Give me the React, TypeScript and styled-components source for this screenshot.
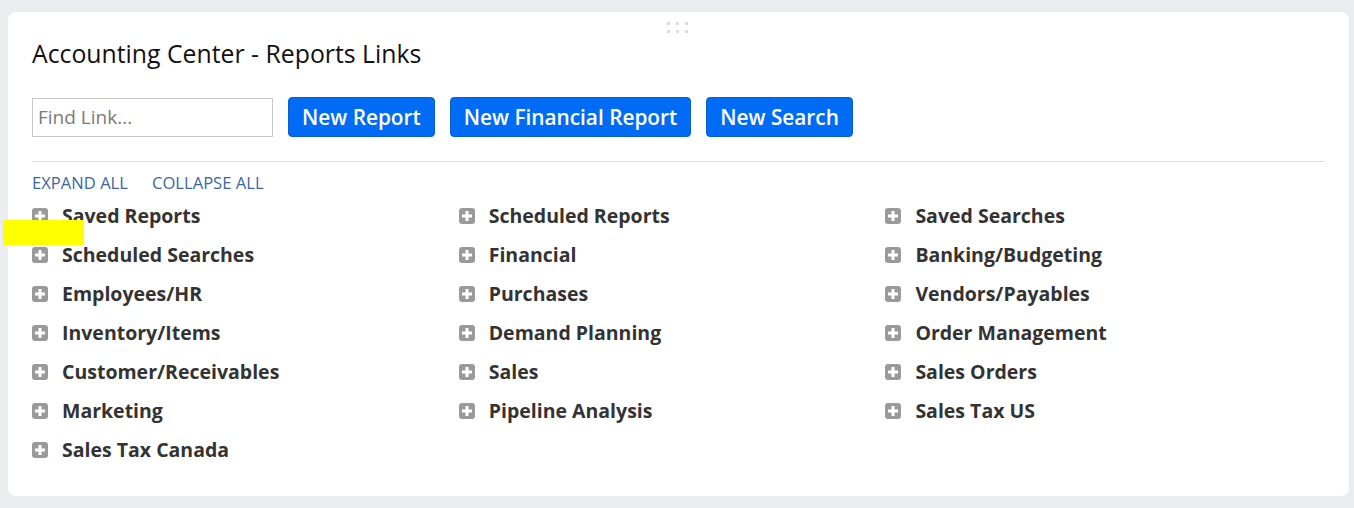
import React from "react";
import styled, { createGlobalStyle } from "styled-components";

const GlobalStyle = createGlobalStyle`
  html, body {
    margin: 0;
    padding: 0;
    background: #ebecf0;
    font-family: "Open Sans", "Noto Sans", sans-serif;
  }
  * { box-sizing: border-box; }
`;

const Page = styled.div`
  position: relative;
  padding: 12px 5px 13px 8px;
`;

const Card = styled.section`
  background: #ffffff;
  border-radius: 8px;
  padding: 0 24px 27px;
`;

const Grip = styled.div`
  height: 26px;
  padding-top: 10px;
  display: grid;
  grid-template-columns: repeat(3, 3px);
  grid-auto-rows: 3px;
  column-gap: 6px;
  row-gap: 5px;
  justify-content: center;
  margin-right: 2px;
`;

const GripDot = styled.span`
  background: #dcdcdc;
`;

const Title = styled.h1`
  margin: 0;
  font-size: 24.8px;
  line-height: 30px;
  font-weight: 400;
  color: #111;
`;

const Toolbar = styled.div`
  margin-top: 29px;
  display: flex;
  align-items: center;
  gap: 15px;
  height: 40px;
`;

const Search = styled.input`
  width: 241px;
  height: 39px;
  border: 1px solid #c8c8c8;
  padding: 0 5px;
  font-family: inherit;
  font-size: 19px;
  color: #333;
  outline: none;
  &::placeholder { color: #7a7a7a; }
`;

const Button = styled.button`
  height: 40px;
  padding: 0 13px;
  border: 1px solid #0a5fcc;
  border-radius: 4px;
  background: #006cf5;
  color: #fff;
  font-family: inherit;
  font-size: 20.8px;
  font-weight: 600;
  cursor: pointer;
`;

const Divider = styled.hr`
  margin: 24px 0 0;
  border: 0;
  border-top: 1px solid #dddddd;
`;

const Links = styled.div`
  margin-top: 9px;
  display: flex;
  gap: 24px;
  height: 22px;
  align-items: center;
`;

const TextLink = styled.a`
  font-size: 16.6px;
  color: #3b66a3;
  text-transform: uppercase;
  text-decoration: none;
  cursor: pointer;
`;

const Sections = styled.ul`
  list-style: none;
  margin: 3px 0 0;
  padding: 0;
  display: grid;
  grid-template-columns: repeat(3, 33%);
  grid-auto-rows: 39px;
`;

const Section = styled.li`
  display: flex;
  align-items: center;
  gap: 14px;
  font-size: 19.5px;
  font-weight: 700;
  color: #333;
`;

const Highlight = styled.div`
  position: absolute;
  left: 3px;
  top: 220px;
  width: 81px;
  height: 25px;
  background: #ffff00;
`;

const PlusBox = () => (
  <svg width="16" height="16" viewBox="0 0 16 16" aria-hidden="true">
    <rect x="0" y="0" width="16" height="16" rx="3" fill="#9a9a9a" />
    <rect x="3" y="6.5" width="10" height="3" fill="#fff" />
    <rect x="6.5" y="3" width="3" height="10" fill="#fff" />
  </svg>
);

const sections = [
  "Saved Reports",
  "Scheduled Reports",
  "Saved Searches",
  "Scheduled Searches",
  "Financial",
  "Banking/Budgeting",
  "Employees/HR",
  "Purchases",
  "Vendors/Payables",
  "Inventory/Items",
  "Demand Planning",
  "Order Management",
  "Customer/Receivables",
  "Sales",
  "Sales Orders",
  "Marketing",
  "Pipeline Analysis",
  "Sales Tax US",
  "Sales Tax Canada",
];

export default function App() {
  return (
    <Page>
      <GlobalStyle />
      <Card>
        <Grip>
          {Array.from({ length: 6 }).map((_, i) => (
            <GripDot key={i} />
          ))}
        </Grip>
        <Title>Accounting Center - Reports Links</Title>
        <Toolbar>
          <Search placeholder="Find Link..." />
          <Button>New Report</Button>
          <Button>New Financial Report</Button>
          <Button>New Search</Button>
        </Toolbar>
        <Divider />
        <Links>
          <TextLink>Expand All</TextLink>
          <TextLink>Collapse All</TextLink>
        </Links>
        <Sections>
          {sections.map((s) => (
            <Section key={s}>
              <PlusBox />
              {s}
            </Section>
          ))}
        </Sections>
      </Card>
      <Highlight />
    </Page>
  );
}
